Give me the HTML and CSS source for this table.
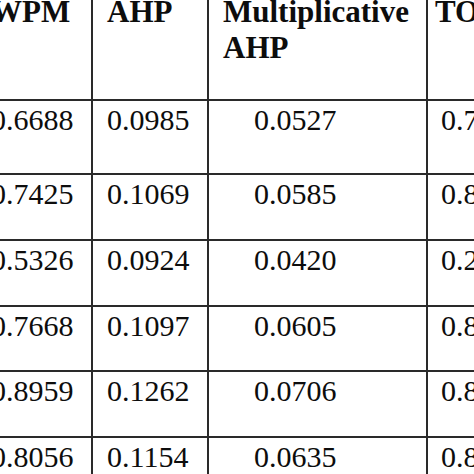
FILE: index.html
```html
<!DOCTYPE html>
<html>
<head>
<meta charset="utf-8">
<link rel="stylesheet" href="styles.css">
</head>
<body>
<div class="table">
  <div class="cell head">WPM</div>
  <div class="cell head">AHP</div>
  <div class="cell head">Multiplicative AHP</div>
  <div class="cell head last">TOPSIS</div>

  <div class="cell">0.6688</div>
  <div class="cell">0.0985</div>
  <div class="cell mid">0.0527</div>
  <div class="cell last">0.7241</div>

  <div class="cell">0.7425</div>
  <div class="cell">0.1069</div>
  <div class="cell mid">0.0585</div>
  <div class="cell last">0.8012</div>

  <div class="cell">0.5326</div>
  <div class="cell">0.0924</div>
  <div class="cell mid">0.0420</div>
  <div class="cell last">0.2136</div>

  <div class="cell">0.7668</div>
  <div class="cell">0.1097</div>
  <div class="cell mid">0.0605</div>
  <div class="cell last">0.8154</div>

  <div class="cell">0.8959</div>
  <div class="cell">0.1262</div>
  <div class="cell mid">0.0706</div>
  <div class="cell last">0.8833</div>

  <div class="cell">0.8056</div>
  <div class="cell">0.1154</div>
  <div class="cell mid">0.0635</div>
  <div class="cell last">0.8417</div>
</div>
</body>
</html>
```

FILE: styles.css
```css
html, body {
  margin: 0;
  padding: 0;
  background: #ffffff;
  width: 474px;
  height: 474px;
  overflow: hidden;
}

.table {
  display: grid;
  grid-template-columns: 116px 116px 219px 160px;
  grid-template-rows: 107px 74px 66px 66px 65px 66px 66px;
  margin-left: -23px;
  margin-top: -6px;
  width: 611px;
  font-family: "Liberation Serif", "Times New Roman", serif;
  font-size: 30px;
  color: #0d0d0d;
}

.cell {
  box-sizing: border-box;
  border-right: 2px solid #2a2a2a;
  border-bottom: 2px solid #2a2a2a;
  padding: 1px 0 0 14px;
  line-height: 36px;
  white-space: nowrap;
  overflow: hidden;
}

.cell.head {
  font-weight: bold;
  font-size: 31px;
  line-height: 35.6px;
  padding-top: 0;
  white-space: normal;
}

.cell.mid {
  padding-left: 45px;
}

.cell.last {
  padding-left: 13px;
  border-right: none;
}

.cell.head.last {
  padding-left: 7px;
}
```
